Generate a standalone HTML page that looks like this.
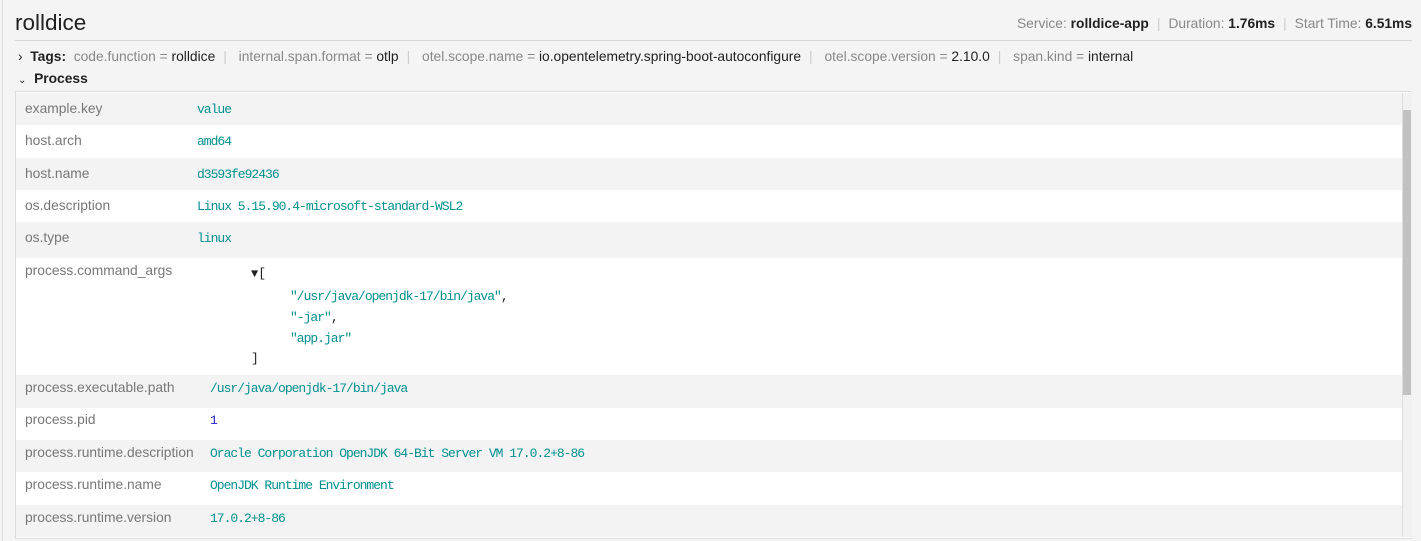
<!DOCTYPE html>
<html><head><style>
body{margin:0;width:1421px;height:541px;background:#f4f4f4;font-family:"Liberation Sans",sans-serif;position:relative;overflow:hidden;color:#222}
.a{position:absolute;white-space:nowrap}
.lb{position:absolute;left:2px;top:0;width:1px;height:541px;background:#ddd}
.k{color:#777;font-size:13.8px}
.v{font-family:"Liberation Mono",monospace;font-size:13px;letter-spacing:-1px;color:#00908f}
.row{position:absolute;left:16px;width:1386px}
.g{background:#f3f3f3}.w{background:#fff}
.sep{color:#ccc;margin:0 8px}
</style></head><body>
<div class="lb"></div>
<div class="a" style="left:15px;top:10px;font-size:22.5px;color:#222">rolldice</div>
<div class="a" style="right:9px;top:16px;font-size:13.8px;color:#888">Service: <b style="color:#222">rolldice-app</b><span class="sep">|</span>Duration: <b style="color:#222">1.76ms</b><span class="sep">|</span>Start Time: <b style="color:#222">6.51ms</b></div>
<div class="a" style="left:15px;top:40px;width:1397px;height:1px;background:#d8d8d8"></div>
<div class="a" style="left:18px;top:49px;font-size:13.8px;color:#888"><span style="color:#222">&#8250;</span>&nbsp; <b style="color:#222">Tags:</b>&nbsp; code.function = <span style="color:#222">rolldice</span><span class="sep">|</span> internal.span.format = <span style="color:#222">otlp</span><span class="sep">|</span> otel.scope.name = <span style="color:#222">io.opentelemetry.spring-boot-autoconfigure</span><span class="sep">|</span> otel.scope.version = <span style="color:#222">2.10.0</span><span class="sep">|</span> span.kind = <span style="color:#222">internal</span></div>
<div class="a" style="left:18px;top:71px;font-size:13.8px;color:#222"><span style="font-size:10px">&#8964;</span>&nbsp; <b>Process</b></div>
<div class="a" style="left:15px;top:91px;width:1397px;height:448px;border:1px solid #ddd;box-sizing:border-box;background:#fff"></div>
<div class="row g" style="top:93px;height:32px"></div>
<div class="row w" style="top:125px;height:33px"></div>
<div class="row g" style="top:158px;height:32px"></div>
<div class="row w" style="top:190px;height:32px"></div>
<div class="row g" style="top:222px;height:36px"></div>
<div class="row w" style="top:258px;height:117px"></div>
<div class="row g" style="top:375px;height:33px"></div>
<div class="row w" style="top:408px;height:32px"></div>
<div class="row g" style="top:440px;height:32px"></div>
<div class="row w" style="top:472px;height:33px"></div>
<div class="row g" style="top:505px;height:32px"></div>
<div class="a" style="left:1402px;top:93px;width:9px;height:444px;background:#f1f1f1;border-left:1px solid #ddd"></div>
<div class="a" style="left:1403px;top:110px;width:8px;height:285px;background:#c1c1c1"></div>
<div class="a k" style="left:25px;top:101px">example.key</div><div class="a v" style="left:197px;top:102px">value</div>
<div class="a k" style="left:25px;top:133px">host.arch</div><div class="a v" style="left:197px;top:134px">amd64</div>
<div class="a k" style="left:25px;top:166px">host.name</div><div class="a v" style="left:197px;top:167px">d3593fe92436</div>
<div class="a k" style="left:25px;top:198px">os.description</div><div class="a v" style="left:197px;top:199px">Linux 5.15.90.4-microsoft-standard-WSL2</div>
<div class="a k" style="left:25px;top:230px">os.type</div><div class="a v" style="left:197px;top:231px">linux</div>
<div class="a k" style="left:25px;top:263px">process.command_args</div>
<div class="a v" style="left:251px;top:266px;color:#222;letter-spacing:0"><span style="font-size:12px">&#9660;</span>[</div>
<div class="a v" style="left:290px;top:289px">"/usr/java/openjdk-17/bin/java"<span style="color:#222">,</span></div>
<div class="a v" style="left:290px;top:310px">"-jar"<span style="color:#222">,</span></div>
<div class="a v" style="left:290px;top:331px">"app.jar"</div>
<div class="a v" style="left:251px;top:351px;color:#222">]</div>
<div class="a k" style="left:25px;top:380px">process.executable.path</div><div class="a v" style="left:210px;top:381px">/usr/java/openjdk-17/bin/java</div>
<div class="a k" style="left:25px;top:412px">process.pid</div><div class="a v" style="left:210px;top:413px;color:#2222cc">1</div>
<div class="a k" style="left:25px;top:445px">process.runtime.description</div><div class="a v" style="left:210px;top:446px">Oracle Corporation OpenJDK 64-Bit Server VM 17.0.2+8-86</div>
<div class="a k" style="left:25px;top:477px">process.runtime.name</div><div class="a v" style="left:210px;top:478px">OpenJDK Runtime Environment</div>
<div class="a k" style="left:25px;top:510px">process.runtime.version</div><div class="a v" style="left:210px;top:511px">17.0.2+8-86</div>
</body></html>
